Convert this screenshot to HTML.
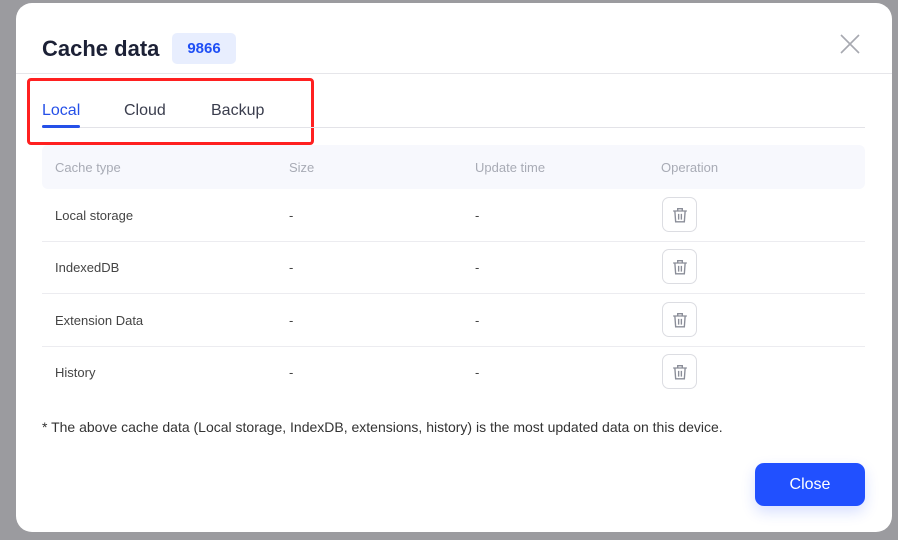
<!DOCTYPE html>
<html><head><meta charset="utf-8"><style>
*{box-sizing:border-box;margin:0;padding:0}
body{width:898px;height:540px;overflow:hidden;background:#9b9b9f;font-family:"Liberation Sans",sans-serif;position:relative}
.modal{position:absolute;left:16px;top:3px;width:876px;height:529px;background:#fff;border-radius:16px}
.abs{position:absolute}
.title{left:26px;top:33px;font-size:22px;font-weight:bold;color:#1c2136}
.badge{left:156px;top:30px;width:64px;height:31px;background:#e8eefe;border-radius:5px;color:#1f4ff5;font-weight:bold;font-size:15px;text-align:center;line-height:31px}
.hdiv{left:0;right:0;top:70px;height:1px;background:#e6e6ea}
.red{left:11px;top:75px;width:287px;height:67px;border:3px solid #ff2020;border-radius:4px}
.tab{top:99px;font-size:16px;color:#3a3d4d}
.tdiv{left:26px;width:823px;top:124px;height:1px;background:#e3e3e8}
.ul{left:26px;top:122px;width:38px;height:3px;background:#2550e8;border-radius:2px}
.th{left:26px;top:142px;width:823px;height:44px;background:#f7f8fd;border-radius:6px}
.htxt{top:157px;font-size:13px;color:#a8abb5}
.cell{font-size:13px;color:#444}
.row{left:26px;width:823px;height:1px;background:#ececf0}
.btn{left:646px;width:35px;height:35px;border:1px solid #dcdde2;border-radius:7px;display:flex;align-items:center;justify-content:center}
.note{left:26px;top:416px;font-size:14px;color:#333}
.close{left:739px;top:460px;width:110px;height:43px;background:#2150ff;border-radius:9px;color:#fff;font-size:16px;text-align:center;line-height:43px;box-shadow:0 6px 14px rgba(33,80,255,.18)}
</style></head><body>
<div class="modal">
<div class="abs title">Cache data</div>
<div class="abs badge">9866</div>
<svg class="abs" style="left:824px;top:31px" width="20" height="20" viewBox="0 0 20 20"><path d="M1 1L19 19M19 1L1 19" stroke="#a7a9b0" stroke-width="1.6"/></svg>
<div class="abs hdiv"></div>
<div class="abs red"></div>
<div class="abs tab" style="left:26px;color:#2550e8">Local</div>
<div class="abs tab" style="left:108px">Cloud</div>
<div class="abs tab" style="left:195px">Backup</div>
<div class="abs tdiv"></div>
<div class="abs ul"></div>
<div class="abs th"></div>
<div class="abs htxt" style="left:39px">Cache type</div>
<div class="abs htxt" style="left:273px">Size</div>
<div class="abs htxt" style="left:459px">Update time</div>
<div class="abs htxt" style="left:645px">Operation</div>

<div class="abs cell" style="left:39px;top:205px">Local storage</div>
<div class="abs cell" style="left:273px;top:205px">-</div>
<div class="abs cell" style="left:459px;top:205px">-</div>
<div class="abs row" style="top:238px"></div>
<div class="abs cell" style="left:39px;top:257px">IndexedDB</div>
<div class="abs cell" style="left:273px;top:257px">-</div>
<div class="abs cell" style="left:459px;top:257px">-</div>
<div class="abs row" style="top:290px"></div>
<div class="abs cell" style="left:39px;top:310px">Extension Data</div>
<div class="abs cell" style="left:273px;top:310px">-</div>
<div class="abs cell" style="left:459px;top:310px">-</div>
<div class="abs row" style="top:343px"></div>
<div class="abs cell" style="left:39px;top:362px">History</div>
<div class="abs cell" style="left:273px;top:362px">-</div>
<div class="abs cell" style="left:459px;top:362px">-</div>

<div class="abs btn" style="top:194px"><svg width="16" height="16" viewBox="0 0 14 14"><path d="M1 3.5H13M5 3.5V1.5H9V3.5M2.5 3.5L3.2 13H10.8L11.5 3.5M5.8 6V11M8.2 6V11" stroke="#8a8d98" stroke-width="1.2" fill="none"/></svg></div>
<div class="abs btn" style="top:246px"><svg width="16" height="16" viewBox="0 0 14 14"><path d="M1 3.5H13M5 3.5V1.5H9V3.5M2.5 3.5L3.2 13H10.8L11.5 3.5M5.8 6V11M8.2 6V11" stroke="#8a8d98" stroke-width="1.2" fill="none"/></svg></div>
<div class="abs btn" style="top:299px"><svg width="16" height="16" viewBox="0 0 14 14"><path d="M1 3.5H13M5 3.5V1.5H9V3.5M2.5 3.5L3.2 13H10.8L11.5 3.5M5.8 6V11M8.2 6V11" stroke="#8a8d98" stroke-width="1.2" fill="none"/></svg></div>
<div class="abs btn" style="top:351px"><svg width="16" height="16" viewBox="0 0 14 14"><path d="M1 3.5H13M5 3.5V1.5H9V3.5M2.5 3.5L3.2 13H10.8L11.5 3.5M5.8 6V11M8.2 6V11" stroke="#8a8d98" stroke-width="1.2" fill="none"/></svg></div>

<div class="abs note">* The above cache data (Local storage, IndexDB, extensions, history) is the most updated data on this device.</div>
<div class="abs close">Close</div>
</div>
</body></html>
